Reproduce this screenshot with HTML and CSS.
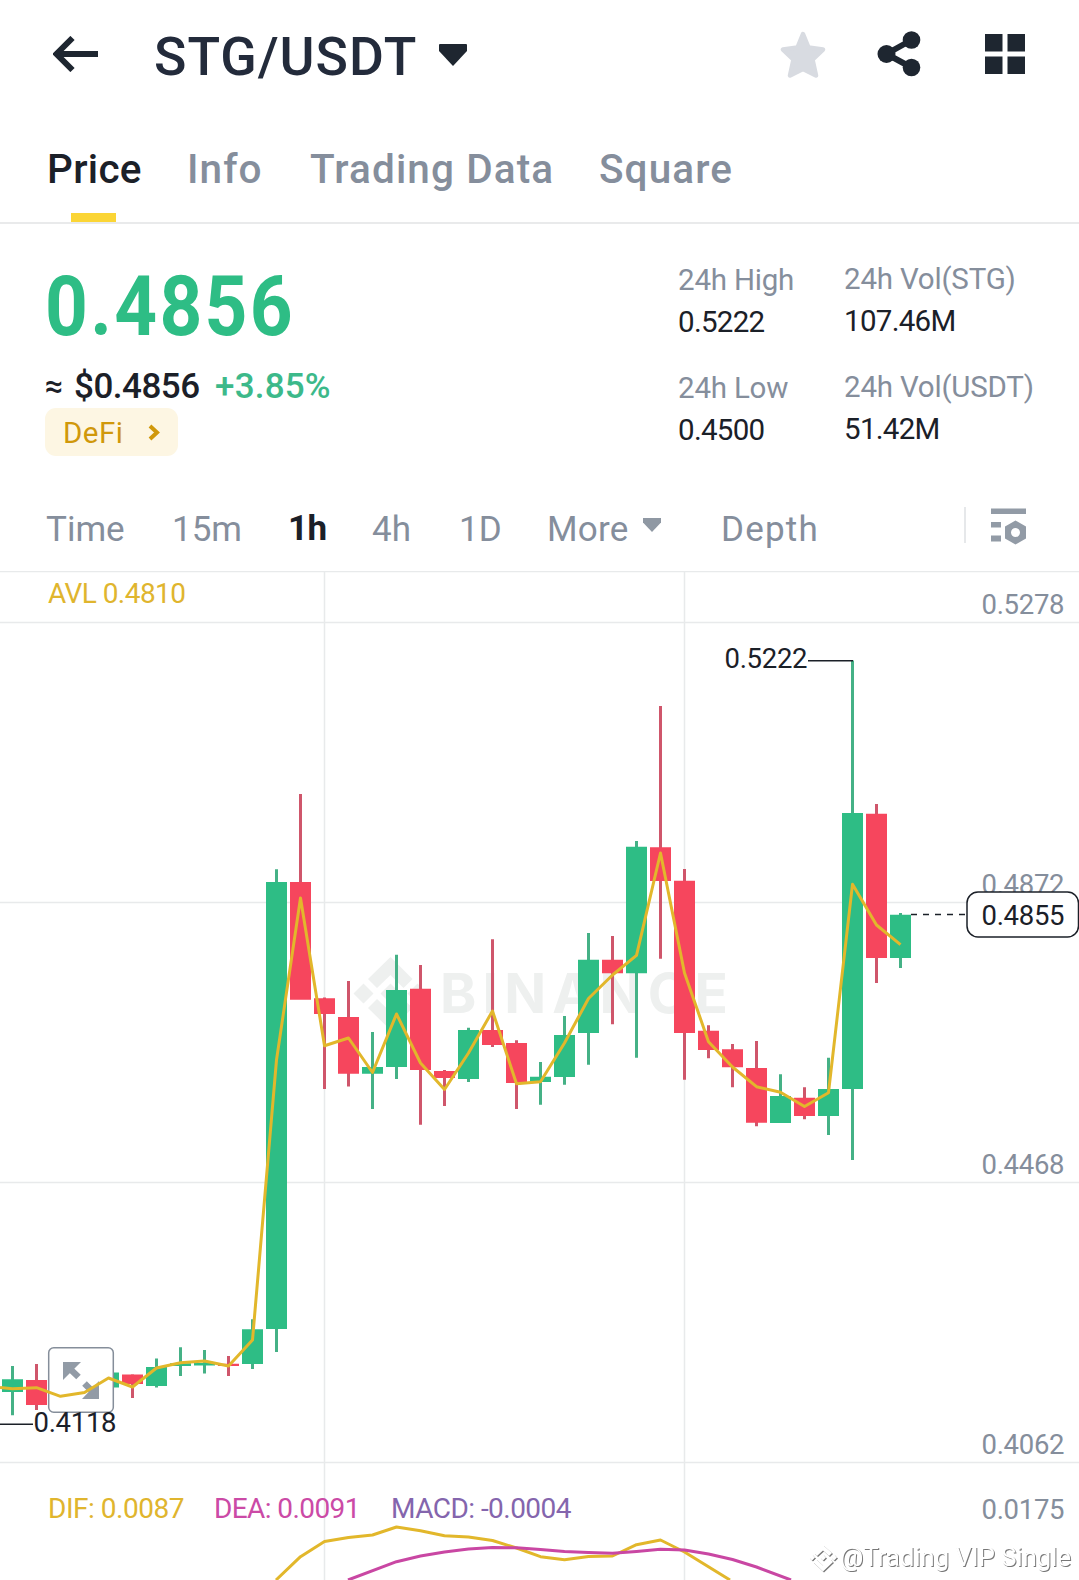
FILE: index.html
```html
<!DOCTYPE html>
<html lang="en">
<head>
<meta charset="utf-8">
<title>STG/USDT</title>
<link rel="stylesheet" href="styles.css">
</head>
<body>
<header class="topbar">
  <svg class="back" width="46" height="36" viewBox="0 0 46 36"><path d="M45 18H4M19.500 2L3.500 18L19.500 34" fill="none" stroke="#1e2630" stroke-width="6"/></svg>
  <h1 class="pair">STG/USDT</h1>
  <svg class="pair-caret" width="28" height="22" viewBox="0 0 28 22"><path d="M1 0H27Q28 0 28 1V7L14 22L0 7V1Q0 0 1 0Z" fill="#1e2630"/></svg>
  <div class="actions">
    <svg width="46" height="48" viewBox="0 0 46 48"><path d="M23 4L28.500 17.500L43 19.500L32.500 29.500L36 45.500L23 39L10 45.500L13.500 29.500L3 19.500L17.500 17.500Z" fill="#d8dbe1" stroke="#d8dbe1" stroke-width="4.500" stroke-linejoin="round"/></svg>
    <svg width="44" height="48" viewBox="0 0 44 48"><path d="M34.500 10L9.500 24L34.500 37.500" fill="none" stroke="#1e2630" stroke-width="6"/><g fill="#1e2630"><circle cx="34.500" cy="10" r="8.800"/><circle cx="9.500" cy="24" r="9"/><circle cx="34.500" cy="37.500" r="8.800"/></g></svg>
    <svg width="40" height="40" viewBox="0 0 40 40"><path d="M0 0H17.500V17.500H0ZM22.500 0H40V17.500H22.500ZM0 22.500H17.500V40H0ZM22.500 22.500H40V40H22.500Z" fill="#1e2630"/></svg>
  </div>
</header>

<nav class="tabs">
  <a class="tab tab-active">Price</a>
  <a class="tab">Info</a>
  <a class="tab tab-data">Trading Data</a>
  <a class="tab">Square</a>
</nav>

<section class="summary">
  <div class="quote">
    <div class="last">0.4856</div>
    <div class="fiat"><span class="approx">≈</span><span class="usd">$0.4856</span><span class="change">+3.85%</span></div>
    <a class="tag"><span>DeFi</span><svg width="12" height="17" viewBox="0 0 12 17"><path d="M2 2L9 8.500L2 15" fill="none" stroke="#d0980b" stroke-width="4"/></svg></a>
  </div>
  <dl class="stats stats-price">
    <dt>24h High</dt><dd>0.5222</dd>
    <dt>24h Low</dt><dd>0.4500</dd>
  </dl>
  <dl class="stats stats-volume">
    <dt>24h Vol(STG)</dt><dd>107.46M</dd>
    <dt>24h Vol(USDT)</dt><dd>51.42M</dd>
  </dl>
</section>

<nav class="intervals">
  <a>Time</a>
  <a>15m</a>
  <a class="selected">1h</a>
  <a>4h</a>
  <a>1D</a>
  <a class="more">More<svg width="18" height="14" viewBox="0 0 18 14"><path d="M0 0H18V4.500L9 14L0 4.500Z" fill="#8f98a3"/></svg></a>
  <a class="depth">Depth</a>
  <span class="divider"></span>
  <svg class="prefs" width="36" height="37" viewBox="0 0 36 37"><g fill="#929ba6"><path d="M0 .5H35V6H0ZM0 14H10V19.500H0ZM0 27.500H10V33.500H0Z"/><path fill-rule="evenodd" d="M24.500 12.500L35 18.500V30.500L24.500 36.500L14 30.500V18.500ZM24.500 20A4.500 4.500 0 1 0 24.500 29A4.500 4.500 0 1 0 24.500 20Z"/></g></svg>
</nav>

<svg class="chart" width="1079" height="1009" viewBox="0 571 1079 1009">
  <path class="grid" d="M0 571.500H1079M0 622.500H1079M0 902.500H1079M0 1182.500H1079M0 1462.500H1079M324.500 571V1580M684.500 571V1580"/>

  <g class="brand">
    <path d="M390.500 957L412.500 979L403.500 988L390.500 975L377 988L368 979ZM390.500 1030L412.500 1008L403.500 999L390.500 1012L377 999L368 1008ZM363.500 983.500L373.500 993.500L363.500 1003.500L353.500 993.500ZM417.500 983.500L427.500 993.500L417.500 1003.500L407.500 993.500ZM390.500 983.500L400.500 993.500L390.500 1003.500L380.500 993.500Z"/>
    <text x="440" y="1013" textLength="288">BINANCE</text>
  </g>

  <g class="axis">
    <text x="981.500" y="614" textLength="83">0.5278</text>
    <text x="981.500" y="893.500" textLength="83">0.4872</text>
    <text x="981.500" y="1174" textLength="83">0.4468</text>
    <text x="981.500" y="1454" textLength="83">0.4062</text>
    <text x="981.500" y="1519" textLength="83">0.0175</text>
  </g>

  <path class="wick up" d="M12.500 1366V1415.300M156.500 1358.500V1387.600M180.500 1347.300V1376M204.500 1350V1373.500M252.500 1319.300V1369M276.500 869.300V1352M372.500 1032V1109M396.500 954.700V1079M468.500 1027.700V1082M540.500 1062V1104.700M564.500 1016V1084.700M588.500 933V1064.700M636.500 841V1057.700M780.500 1074.300V1123M828.500 1057.700V1135M852.500 660.500V1160M900.500 913V968"/>
  <path class="wick down" d="M36.500 1364V1410M132.500 1374.500V1398M228.500 1356V1376M300.500 794V999M324.500 997.500V1089M348.500 981V1086.500M420.500 965V1124.700M444.500 1070V1106M492.500 939.300V1047M516.500 1040.300V1109M612.500 936V1024.300M660.500 706V958.700M684.500 869V1079.700M708.500 1025.300V1058.300M732.500 1044V1087.300M756.500 1041V1126.300M804.500 1087.300V1119.300M876.500 804V983"/>
  <path class="body up-body" d="M12.500 1379.300V1392M108.500 1372.500V1387.500M156.500 1367V1386M180.500 1363.300V1366M204.500 1363V1365.500M252.500 1329.300V1364M276.500 882V1329M372.500 1067V1073.700M396.500 990V1067M468.500 1030V1079M540.500 1076.700V1082M564.500 1035V1077M588.500 959.700V1033M636.500 846.700V973.300M780.500 1096V1123M828.500 1089V1116M852.500 813V1089M900.500 914.700V958"/>
  <path class="body down-body" d="M36.500 1380V1405M132.500 1374.500V1384M228.500 1363.700V1366M300.500 882V999.700M324.500 998.300V1014M348.500 1017V1073.700M420.500 988.700V1070M444.500 1071V1078M492.500 1030V1045M516.500 1043V1083M612.500 959.700V973.300M660.500 847.300V881M684.500 880.700V1033M708.500 1030.700V1050M732.500 1049.300V1067.300M756.500 1068V1122.700M804.500 1097.700V1116M876.500 813.700V958"/>

  <rect x="48.700" y="1347.700" width="64.600" height="64.600" rx="5" fill="#fff" stroke="#858e9a" stroke-width="1.500"/>
  <path d="M63 1362H81L63 1380ZM99 1399H82L99 1381Z" fill="#929ba6"/>
  <path d="M69 1368L78.500 1377M84.500 1383.500L94 1393" stroke="#929ba6" stroke-width="6.500"/>

  <path class="line gold" d="M0 1387.500L12.500 1388.700L36.500 1387.700L60.500 1396.300L84.500 1392.500L108.500 1378L132.500 1387L156.500 1368L180.500 1362.700L204.500 1361L228.500 1366L252.500 1340L276.500 1060L300.500 898L324.500 1045.700L348.500 1038L372.500 1072.500L396.500 1014L420.500 1063L444.500 1089.500L468.500 1053L492.500 1011L516.500 1083.700L540.500 1081.700L564.500 1043L588.500 998.500L612.500 975L636.500 955.300L660.500 853L684.500 973L708.500 1041.700L732.500 1067L756.500 1086.700L780.500 1092.300L804.500 1106.500L828.500 1092.700L852.500 884.300L876.500 925L900.500 944.700"/>

  <g class="mark">
    <path d="M808 660.700H853M0 1424.300H33"/>
    <path d="M911 914.500H965" stroke-dasharray="6 6"/>
    <rect x="967" y="892" width="111.500" height="45" rx="11" fill="#fff"/>
  </g>
  <g class="mark-text">
    <text x="724.500" y="668" textLength="83">0.5222</text>
    <text x="33.500" y="1432" textLength="83">0.4118</text>
    <text x="981.500" y="925" textLength="83">0.4855</text>
  </g>

  <g class="legend">
    <text x="48" y="603" fill="#e0b52e" textLength="138">AVL 0.4810</text>
    <text x="48" y="1518" fill="#e0b52e" textLength="136.500">DIF: 0.0087</text>
    <text x="214" y="1518" fill="#cb4aa6" textLength="146.500">DEA: 0.0091</text>
    <text x="391" y="1518" fill="#8465ad" textLength="180.500">MACD: -0.0004</text>
  </g>
  <path class="line gold" d="M276 1580L300.500 1556.700L324.500 1541.500L348.500 1537.500L372.500 1535L396.500 1527L420.500 1530.700L444.500 1535.700L468.500 1537L492.500 1540.500L516.500 1548L540.500 1556.700L564.500 1559.700L588.500 1556.500L612.500 1556L636.500 1544.700L660.500 1540L684.500 1552L730 1580"/>
  <path class="line plum" d="M348 1580L396.500 1561.700L420.500 1556L444.500 1552L468.500 1549L492.500 1547.500L516.500 1547.800L540.500 1549.500L564.500 1551.500L588.500 1552.500L612.500 1553.300L636.500 1551.500L660.500 1549.300L684.500 1550L708.500 1554L732.500 1559.500L756.500 1567L791 1580"/>

  <g class="credit">
    <path d="M814 1553L823 1545L832 1553L829 1556L823 1550.500L817 1556ZM809 1557.500L812 1554.500L815 1557.500L812 1560.500ZM831 1557.500L834 1554.500L837 1557.500L834 1560.500ZM820 1557.500L823 1554.500L826 1557.500L823 1560.500ZM813 1562L816 1559L823 1565.500L830 1559L833 1562L823 1571.500Z"/>
    <text x="840" y="1566" textLength="231">@Trading VIP Single</text>
  </g>
</svg>
</body>
</html>
```
FILE: styles.css
```css
* { box-sizing: border-box; }

body {
  margin: 0;
  width: 1079px;
  height: 1580px;
  overflow: hidden;
  background: #fff;
  color: #1b2028;
  font-family: Roboto, "Noto Sans", sans-serif;
}

svg { display: block; flex: none; }

.topbar {
  display: flex;
  align-items: center;
  height: 108px;
  padding: 0 54px 0 53px;
}

.pair {
  margin: 5px 0 0 55px;
  width: 285px;
  color: #232b3b;
  font-size: 53.5px;
  font-weight: 500;
  line-height: 64px;
  letter-spacing: 1px;
}

.pair-caret { margin-top: 1px; }

.actions {
  display: flex;
  align-items: center;
  margin-left: auto;
}

.actions svg + svg { margin-left: 51px; }
.actions svg + svg + svg { margin-left: 64px; }

.tabs {
  display: grid;
  grid-template-columns: 140px 123px 289px 200px;
  height: 116px;
  padding-left: 47px;
  border-bottom: 2px solid #e9eaeb;
  color: #858e9c;
  font-size: 40.5px;
  font-weight: 500;
  line-height: 123px;
  letter-spacing: 1.1px;
}

.tab-active {
  position: relative;
  height: 114px;
  color: #1b2028;
  letter-spacing: 0.3px;
}

.tab-active::after {
  content: "";
  position: absolute;
  left: 24px;
  bottom: 0;
  width: 45px;
  height: 9px;
  background: #fbd535;
}

.summary {
  display: flex;
  height: 268px;
}

.quote {
  width: 678px;
  padding: 33px 0 0 45px;
}

.last {
  color: #2ebd85;
  font-size: 83px;
  font-weight: 700;
  line-height: 100px;
  letter-spacing: 2.6px;
  transform: scaleX(0.9);
  transform-origin: 0 0;
}

.fiat {
  display: grid;
  grid-template-columns: 29px 141px 130px;
  height: 51px;
  font-size: 35px;
  font-weight: 500;
  line-height: 59px;
}

.approx { font-size: 32px; }
.usd { letter-spacing: -0.5px; }
.change { color: #3cb98a; letter-spacing: 0.2px; }

.tag {
  display: flex;
  align-items: center;
  justify-content: space-between;
  width: 133px;
  height: 48px;
  padding: 0 18px;
  border-radius: 11px;
  background: #fdf6e3;
  color: #d0980b;
  font-size: 29.5px;
  letter-spacing: 0.5px;
}

.tag span { padding-top: 2px; }

.stats {
  margin: 0;
  font-size: 29.5px;
}

.stats-price { width: 166px; padding-top: 35px; }
.stats-volume { padding-top: 34px; }
.stats dt { height: 42px; line-height: 42px; color: #858e9c; letter-spacing: -0.2px; }
.stats dd { margin: 0 0 24px; height: 42px; line-height: 42px; letter-spacing: -0.7px; }

.intervals {
  display: grid;
  grid-template-columns: 126px 116px 84px 87px 88px 174px 243px 27px 40px;
  height: 79px;
  padding-left: 46px;
  color: #858e9c;
  font-size: 35px;
  line-height: 76px;
}

.selected { color: #1b2028; font-weight: 700; line-height: 74px; letter-spacing: -0.7px; }
.depth { letter-spacing: 1.2px; }

.more {
  display: flex;
  letter-spacing: 0.2px;
}

.more svg { margin: 26px 0 0 15px; }

.divider {
  width: 2px;
  height: 36px;
  margin-top: 15px;
  background: #e6e8ea;
}

.prefs { margin-top: 16px; }

.grid { stroke: #e8eaeb; stroke-width: 1.5; fill: none; }
.brand { fill: #eef0ef; }
.brand text { font: 700 55px Inter, sans-serif; }
.axis { fill: #858e9c; font-size: 27.5px; }
.wick { stroke-width: 3; }
.body { stroke-width: 21; }
.up { stroke: #45b186; }
.down { stroke: #cf566b; }
.up-body { stroke: #2ebd85; }
.down-body { stroke: #f6465d; }
.line { fill: none; stroke-width: 3; stroke-linejoin: round; }
.gold { stroke: #e2b72b; }
.plum { stroke: #c947a3; }
.mark { fill: none; stroke: #1b2028; stroke-width: 1.5; }
.mark-text { fill: #1b2028; font-size: 27.5px; }
.legend { font-size: 28px; }
.credit { fill: #fff; filter: drop-shadow(1px 1px 0.4px #777); }
.credit text { font-size: 26px; }
```
